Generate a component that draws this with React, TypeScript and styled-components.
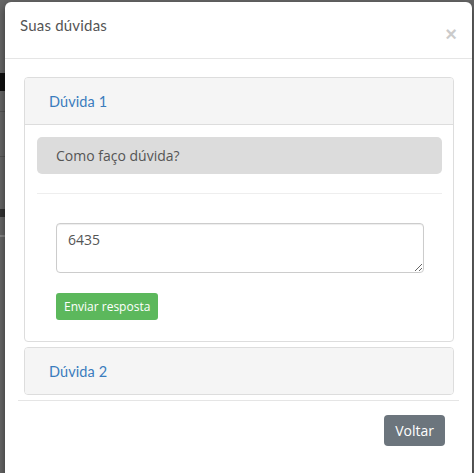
import React from "react";
import styled, { createGlobalStyle } from "styled-components";

const GlobalStyle = createGlobalStyle`
  html, body { margin: 0; padding: 0; background: #676767; }
  * { box-sizing: border-box; }
`;

const Backdrop = styled.div`
  width: 474px;
  height: 473px;
  overflow: hidden;
  background: #676767;
  display: flex;
  align-items: flex-start;
  padding-top: 2px;
`;

const PageStrip = styled.div`
  width: 5px;
  flex: none;
  display: flex;
  flex-direction: column;
  padding-top: 71px;
`;

const StripBlock = styled.div<{ $h: number; $c: string; $mt?: number }>`
  height: ${(p) => p.$h}px;
  margin-top: ${(p) => p.$mt ?? 0}px;
  background: ${(p) => p.$c};
`;

const Modal = styled.div`
  width: 467px;
  flex: none;
  background: #fff;
  border-radius: 6px 6px 0 0;
  box-shadow: 0 3px 9px rgba(0, 0, 0, 0.5);
  font-family: "Open Sans", "Liberation Sans", sans-serif;
  color: #555;
`;

const Header = styled.div`
  height: 57px;
  border-bottom: 1px solid #e5e5e5;
  padding: 12px 15px 0 15px;
  display: flex;
  align-items: flex-start;
  justify-content: space-between;
`;

const Title = styled.h4`
  margin: 0;
  font-family: "Lato", "Noto Sans", sans-serif;
  font-weight: 400;
  font-size: 15px;
  line-height: 22px;
  color: #555;
  letter-spacing: 0.2px;
`;

const Close = styled.button`
  border: 0;
  background: none;
  padding: 0;
  margin-top: 10px;
  font-family: "Liberation Sans", sans-serif;
  font-size: 20px;
  font-weight: 700;
  line-height: 20px;
  color: #000;
  opacity: 0.2;
  cursor: pointer;
`;

const Body = styled.div`
  padding: 18px 18px 5px 19px;
  display: flex;
  flex-direction: column;
  gap: 5px;
`;

const Panel = styled.div`
  border: 1px solid #ddd;
  border-radius: 4px;
  background: #fff;
  overflow: hidden;
`;

const PanelHeading = styled.div<{ $open?: boolean }>`
  height: ${(p) => (p.$open ? 47 : 46)}px;
  background: #f5f5f5;
  border-bottom: ${(p) => (p.$open ? "1px solid #ddd" : "0")};
  padding: 0 24px;
  display: flex;
  align-items: center;
`;

const PanelTitle = styled.a`
  font-family: "Lato", "Noto Sans", sans-serif;
  font-size: 14.5px;
  color: #3a7cbd;
  text-decoration: none;
  letter-spacing: 0.1px;
`;

const PanelBody = styled.div`
  padding: 12px 11px 21px 12px;
`;

const Question = styled.div`
  height: 37px;
  background: #dcdcdc;
  border-radius: 5px;
  padding: 0 19px;
  display: flex;
  align-items: center;
  font-size: 14px;
  color: #555;
`;

const Rule = styled.hr`
  border: 0;
  border-top: 1px solid #eee;
  margin: 19px 0 29px 0;
`;

const Form = styled.div`
  padding: 0 18px 0 19px;
  display: flex;
  flex-direction: column;
  align-items: flex-start;
  gap: 20px;
`;

const TextArea = styled.textarea`
  display: block;
  width: 100%;
  height: 50px;
  border: 1px solid #ccc;
  border-radius: 4px;
  padding: 6px 11px;
  font-family: "Open Sans", "Liberation Sans", sans-serif;
  font-size: 14px;
  line-height: 20px;
  color: #555;
  box-shadow: inset 0 1px 1px rgba(0, 0, 0, 0.075);
  resize: vertical;
  outline: none;
`;

const Button = styled.button<{ $variant: "success" | "secondary" }>`
  border: 0;
  color: #fff;
  cursor: pointer;
  font-family: "Open Sans", "Liberation Sans", sans-serif;
  background: ${(p) => (p.$variant === "success" ? "#5cb85c" : "#6c757d")};
  border-radius: ${(p) => (p.$variant === "success" ? 3 : 4)}px;
  font-size: ${(p) => (p.$variant === "success" ? 12 : 14)}px;
  height: ${(p) => (p.$variant === "success" ? 27 : 31)}px;
  padding: ${(p) => (p.$variant === "success" ? "0 8px" : "0 11px")};
`;

const Footer = styled.div`
  margin: 0 13px;
  border-top: 1px solid #e5e5e5;
  padding: 14px 14px 30px 0;
  display: flex;
  justify-content: flex-end;
`;

export default function App() {
  return (
    <>
      <GlobalStyle />
      <Backdrop>
        <PageStrip>
          <StripBlock $h={18} $c="#111" />
          <StripBlock $h={1} $c="#555" $mt={20} />
          <StripBlock $h={1} $c="#555" $mt={44} />
          <StripBlock $h={8} $c="#333" $mt={52} />
          <StripBlock $h={2} $c="#888" $mt={18} />
        </PageStrip>
        <Modal>
          <Header>
            <Title>Suas dúvidas</Title>
            <Close aria-label="Fechar">×</Close>
          </Header>
          <Body>
            <Panel>
              <PanelHeading $open>
                <PanelTitle href="#">Dúvida 1</PanelTitle>
              </PanelHeading>
              <PanelBody>
                <Question>Como faço dúvida?</Question>
                <Rule />
                <Form>
                  <TextArea defaultValue="6435" />
                  <Button $variant="success">Enviar resposta</Button>
                </Form>
              </PanelBody>
            </Panel>
            <Panel>
              <PanelHeading>
                <PanelTitle href="#">Dúvida 2</PanelTitle>
              </PanelHeading>
            </Panel>
          </Body>
          <Footer>
            <Button $variant="secondary">Voltar</Button>
          </Footer>
        </Modal>
      </Backdrop>
    </>
  );
}
